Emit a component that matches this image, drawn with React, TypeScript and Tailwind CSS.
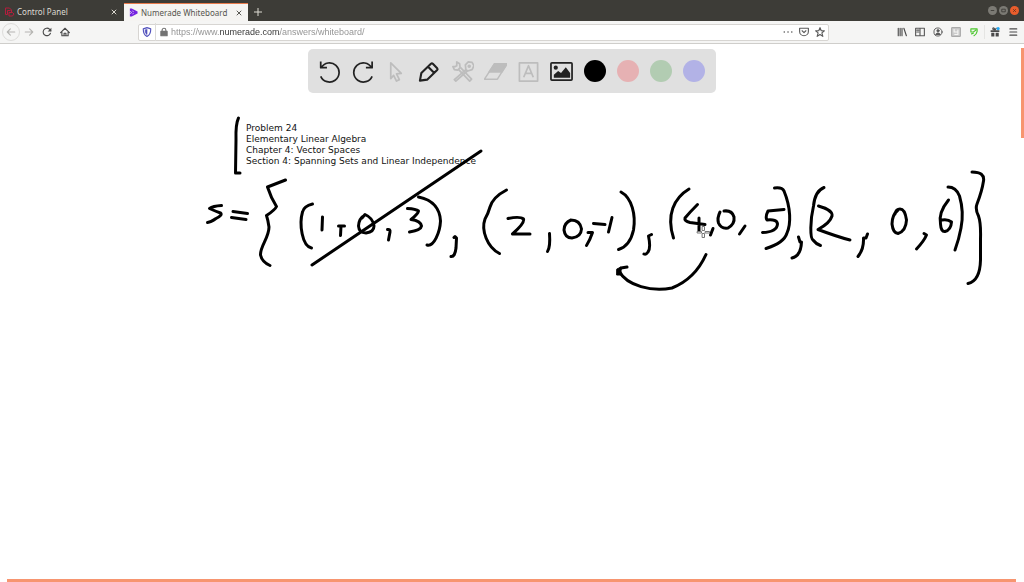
import { useState } from 'react';
import type { ReactNode } from 'react';

const NOTE_LINES = [
  'Problem 24',
  'Elementary Linear Algebra',
  'Chapter 4: Vector Spaces',
  'Section 4: Spanning Sets and Linear Independence',
];

// Pen strokes in board coordinates, grouped by symbol
const STROKES = [
  // margin bracket
  'M238.500 118Q235.500 124 236 140L235.500 173H240',
  // s =
  'M221.500 205.500Q213 206 209.500 208.500Q215 211 220.500 213Q223 215 216 218.500Q211 222 207.500 222.500',
  'M233 211.500L247.500 213.500',
  'M231.500 217.500L246 219.500',
  // {
  'M285.500 180L267.500 187Q271 198 276.500 206.500Q275 210 266.500 215.500Q268 220 269 227C269 238 260 246 260.500 255Q262 262 270 265.500',
  // (1, 0, 3)
  'M312.500 204Q304 206 302.500 212C299 224 302 246 311.500 248',
  'M322.500 217L322 230',
  'M338.500 226H344.500M341 226L340.500 235.500',
  'M365 215Q359 218 358.500 226Q359 233 366 233Q374 232 374 226Q373 218 365 214.500L362 218',
  'M387.500 229.500Q390.500 229 390 232L388.500 240',
  'M407.500 208.500Q416 209 418.500 211Q418 214 411 219.500Q421 221 421.500 226Q421 230 409.500 232',
  'M418.500 197C434 200 440 210 440.500 221C440 232 434 247 427 245',
  'M312 265L481 151',
  'M454 237.500L455 236.500L456.500 238L456 248Q455 257 451 256.500',
  // (2, 0, -1)
  'M506.500 190Q493 197 490 207Q488 214 485 219C481 230 487 247 499.500 253.500',
  'M508 218.500Q520 216 523.500 219Q525 223 512.500 234H530',
  'M549.500 233.500Q550.500 247 547.500 251.500',
  'M571 220Q564 223 564 230Q565 238 572 238Q581 237 581.500 229Q580 220 571 220',
  'M588 232.500H592.500Q590 240 586.500 245.500',
  'M593.500 223.500L605 224.500',
  'M612 217.500L608.500 232',
  'M621 192C632 198 636 215 633.500 230Q630 246 618.500 249.500',
  'M651.500 234.500L648.500 236Q651 248 648 252Q646 255 644 254',
  // (4, 0, 5)
  'M689 189C674 198 666 215 673.500 238',
  'M697.500 204.500Q690 212 685 218Q684 221 690 222.500L705 224.500M699 218V231.500',
  'M713 228.500L710.500 235',
  'M720 212Q717 218 718.500 223Q721 229 728 228Q735 224 734 217Q732 210 724 211',
  'M745 226L739.500 234',
  'M784 209.500L768 211Q765 217 767 220Q777 219 777.500 224Q777 232 762.500 232.500',
  'M774.500 188Q782 187 784 191C791 208 791 224 787 233Q784 243 766 248.500',
  'M798.500 237L800 242H801.500Q801 256 792 258',
  // (2, 0, 6)
  'M824 187.500Q815 191 813.500 206C810 221 810 238 813 240Q816 244 820.500 245.500',
  'M818.500 206Q833 210 832 216Q830 223 818 229.500Q838 237 850 240',
  'M867.500 234L866 238H863.500Q864 249 858 256.500',
  'M898 210Q892 215 892 224Q893 233 898 233.500Q906 231 906.500 220Q905 209 900 209Q896 209 895 214',
  'M924 233.500L926.500 235Q924 241 916.500 249',
  'M948.500 200C942 208 939 217 940.500 224Q941 232 945 231.500Q951 230 951.500 222Q948 219 942 220',
  'M948 187Q956 187 959.500 196C963 208 963 218 961 228Q959 239 955 250',
  // }
  'M972 172Q985 172 983.500 181Q982 191 977 204Q975 209 978.500 216Q981 223 980.500 239V260Q980 281 968 283.500',
  // arrow from 4 to -1
  'M706 254.500Q695 279 672 288C652 292 627 286 619 271L621 268L627 267',
];

const COLORS = [
  { name: 'Black', className: 'bg-black' },
  { name: 'Red', className: 'bg-[#e6b1b3]' },
  { name: 'Green', className: 'bg-[#b2ccb2]' },
  { name: 'Blue', className: 'bg-[#b2b2e6]' },
];

const TOOLS: { name: string; muted?: boolean; icon: ReactNode }[] = [
  {
    name: 'Undo',
    icon: <path d="M1.800 1.500v6.500h6.500M2.300 8A10 10 0 1 1 1.800 17" />,
  },
  {
    name: 'Redo',
    icon: <path d="M21 1.500v6.500h-6.500M20.500 8A10 10 0 1 0 21 17" />,
  },
  {
    name: 'Select',
    muted: true,
    icon: <path d="M6 3l11 11-5 .500 3 6-3 1.500-3-6L6 19.500z" />,
  },
  {
    name: 'Pen',
    icon: <path d="M2 21.500L3.500 13.500 13.500 4a1.500 1.500 0 0 1 2 0l4.500 4.500a1.500 1.500 0 0 1 0 2L9.500 20.500zM10.500 7l6.500 6.500" strokeWidth="2.200" />,
  },
  {
    name: 'Tools',
    muted: true,
    icon: (
      <>
        <path d="M2 7l1.500 3 3.500.500 2.500-2.500-.500-4-3-2v4L4 7z" />
        <path d="M8 10l11.500 12 2-2L10 8" />
        <path d="M15.500 10L3.500 20.500l1.500 1.500 12-10.500M15.500 10L15 5l3-3 4 .500L24 6l-2 4-4.500 1.500z" />
        <circle cx="19" cy="6.500" r="1" />
      </>
    ),
  },
  {
    name: 'Eraser',
    muted: true,
    icon: (
      <>
        <path d="M.500 20L11 4h13L14 20z" strokeWidth="1.500" />
        <path d="M5.500 12.500L11 4h13L18.500 12.500z" fill="currentColor" />
      </>
    ),
  },
  {
    name: 'Text',
    muted: true,
    icon: (
      <>
        <path d="M2.500 3h19v19h-19z" />
        <path d="M7 18l5-12 5 12M9 14h6" />
      </>
    ),
  },
  {
    name: 'Image',
    icon: (
      <>
        <rect x="1" y="3" width="22" height="18" rx="1" />
        <circle cx="6" cy="8" r="2.200" fill="currentColor" stroke="none" />
        <path d="M4 18.500v-3l4.500-4 3 2 5-6 4.500 6v5z" fill="currentColor" stroke="none" />
      </>
    ),
  },
];

function IconButton({
  label,
  className = 'text-[#5a5a5a]',
  disabled,
  children,
}: {
  label: string;
  className?: string;
  disabled?: boolean;
  children: ReactNode;
}) {
  return (
    <button
      aria-label={label}
      disabled={disabled}
      className={`flex h-[18px] min-w-[16px] shrink-0 items-center justify-center ${className}`}
    >
      <svg
        viewBox="0 0 16 16"
        className="size-[10px]"
        fill="none"
        stroke="currentColor"
        strokeWidth="1.800"
        strokeLinecap="round"
        strokeLinejoin="round"
      >
        {children}
      </svg>
    </button>
  );
}

function CloseIcon() {
  return (
    <svg viewBox="0 0 8 8" className="size-[6px]" fill="none" stroke="currentColor" strokeWidth="1.300">
      <path d="M1 1l6 6M7 1L1 7" />
    </svg>
  );
}

function TabBar() {
  return (
    <header className="flex h-[21px] items-end bg-[#3d3c37] text-[8px] leading-[18px]">
      <div className="flex h-[18px] w-[124px] items-center pr-[5px] pl-[5px] text-[#dedbd3]">
        <svg viewBox="0 0 20 20" className="size-[10px]" fill="none" stroke="#b51d3d" strokeWidth="2">
          <path d="M1 15V2h8l4 4v4M5 7h6M5 7v8H1M8 11h7l3 3-3 4H8z" />
        </svg>
        <button className="ml-[2px] flex-1 text-left">Control Panel</button>
        <button aria-label="Close Control Panel" className="p-[2px]">
          <CloseIcon />
        </button>
      </div>
      <div className="flex h-[18px] w-[124px] items-center border-t border-[#e87b4c] bg-[#f5f4f2] pr-[4px] pl-[5px] text-[#55544f]">
        <svg viewBox="0 0 20 20" className="size-[9px]">
          <path d="M2 1h4l13 7v4L6 19H2z" fill="#7422e0" />
          <path d="M2 7l4 3-4 3M8 6l2 3M8 14l2-3" stroke="#f5f4f2" strokeWidth="1.500" fill="none" />
        </svg>
        <button className="ml-[3px] flex-1 text-left whitespace-nowrap">Numerade Whiteboard</button>
        <button aria-label="Close Numerade Whiteboard" className="p-[2px]">
          <CloseIcon />
        </button>
      </div>
      <button aria-label="New tab" className="flex h-[18px] w-[19px] items-center justify-center text-[#dedbd3]">
        <svg viewBox="0 0 8 8" className="size-[8px]" stroke="currentColor" strokeWidth="1">
          <path d="M4 0v8M0 4h8" />
        </svg>
      </button>
      <div className="mr-[5px] ml-auto flex h-[21px] items-center gap-[2px]">
        <button aria-label="Minimize" className="flex size-[9px] items-center justify-center rounded-full bg-[#7b7a74] text-[#3d3c37]">
          <svg viewBox="0 0 8 8" className="size-[7px]" stroke="currentColor"><path d="M2 4h4" /></svg>
        </button>
        <button aria-label="Maximize" className="flex size-[9px] items-center justify-center rounded-full bg-[#7b7a74] text-[#3d3c37]">
          <svg viewBox="0 0 8 8" className="size-[7px]" fill="none" stroke="currentColor"><path d="M2 2.500h4v3H2z" /></svg>
        </button>
        <button aria-label="Close window" className="flex size-[9px] items-center justify-center rounded-full bg-[#e95d2c] text-[#65311c]">
          <svg viewBox="0 0 8 8" className="size-[7px]" stroke="currentColor"><path d="M2.500 2.500l3 3M5.500 2.500l-3 3" /></svg>
        </button>
      </div>
    </header>
  );
}

function NavBar() {
  const [url, setUrl] = useState('https://www.numerade.com/answers/whiteboard/');

  return (
    <nav className="flex h-[23px] items-center border-b border-[#cfcecb] bg-[#f5f5f4] pr-[2px] pl-[2px]">
      <IconButton label="Back" disabled className="w-[18px] rounded-full border border-[#dddcda] text-[#b5b4b1]">
        <path d="M14 8H2M7 3L2 8l5 5" />
      </IconButton>
      <IconButton label="Forward" disabled className="w-[18px] text-[#b5b4b1]">
        <path d="M2 8h12M9 3l5 5-5 5" />
      </IconButton>
      <IconButton label="Reload" className="w-[18px] text-[#4a4a4a]">
        <path d="M13.500 10A6 6 0 1 1 12 3.500L14 6" />
        <path d="M15 1v6H9z" fill="currentColor" stroke="none" />
      </IconButton>
      <IconButton label="Home" className="w-[18px] text-[#4a4a4a]">
        <path d="M1 9l7-7 7 7M3 8v6h10V8M6.500 14v-4h3v4" />
      </IconButton>

      <div className="ml-[64px] flex h-[17px] min-w-0 flex-1 items-center rounded-[2px] border border-[#d7d5d2] bg-white">
        <IconButton label="Tracking protection" className="text-[#5252bd]">
          <path d="M8 1l6 2c0 6-2 10-6 12-4-2-6-6-6-12z" />
          <path d="M8 4v8c-2-1-3-4-3-7z" fill="currentColor" strokeWidth="1" />
        </IconButton>
        <IconButton label="Site information" className="border-l border-[#dddcd9] text-[#737373]">
          <path d="M5 7V5a3 3 0 0 1 6 0v2" />
          <rect x="3" y="7" width="10" height="7" fill="currentColor" />
        </IconButton>
        <input
          aria-label="Address"
          value={url}
          onChange={(e) => setUrl(e.target.value)}
          className="min-w-0 flex-1 bg-[linear-gradient(to_right,#8f8f8f_49px,#333_49px,#333_109px,#8f8f8f_109px)] bg-clip-text font-['Liberation_Sans',sans-serif] text-[9px] leading-[15px] text-transparent outline-none"
        />
        <IconButton label="Page actions">
          <path d="M2 8h.1M8 8h.1M14 8h.1" strokeWidth="2.500" />
        </IconButton>
        <IconButton label="Save to Pocket">
          <path d="M1 2h14v5a7 7 0 0 1-14 0zM5 6l3 3 3-3" />
        </IconButton>
        <IconButton label="Bookmark">
          <path d="M8 1l2 5h5l-4 3.500 1.500 5.500L8 12l-4.500 3L5 9.500 1 6h5z" />
        </IconButton>
      </div>

      <div className="ml-[64px] flex items-center">
        <IconButton label="Library" className="w-[18px] text-[#4a4a4a]">
          <path d="M2 2v12M5 2v12M8 2v12M11 2l4 12" />
        </IconButton>
        <IconButton label="Sidebar" className="w-[18px] text-[#5a5a5a]">
          <path d="M1 2h14v12H1zM8 2v12M3 5h3M3 8h3" />
        </IconButton>
        <IconButton label="Account" className="w-[18px] text-[#5a5a5a]">
          <circle cx="8" cy="8" r="6.500" strokeWidth="1.500" />
          <circle cx="8" cy="6" r="2" fill="currentColor" strokeWidth="1" />
          <path d="M4.500 12Q8 7.500 11.500 12z" fill="currentColor" />
        </IconButton>
        <IconButton label="Extension" className="w-[18px] text-[#aaa]">
          <rect x="1" y="1" width="14" height="14" rx="1" fill="#ccc" />
          <path d="M5 4v4h6M11 5v7H6" stroke="#f5f5f4" />
        </IconButton>
        <IconButton label="Privacy" className="w-[18px] text-[#4bc72c]">
          <path d="M3 3h10v4q-1 5-5 7M3 3v5h4l4-3M4 11l3-1" />
        </IconButton>
        <span className="mx-px h-[14px] w-px bg-[#e5e5e3]" />
        <IconButton label="What's new" className="w-[18px] text-[#4a4a4a]">
          <path d="M1 5h14v3H1zM2 9h5v6H2zM9 9h5v6H9z" fill="currentColor" stroke="none" />
          <path d="M8 5Q3 4 5 1.500Q7 1 8 5L10 2" />
          <circle cx="13" cy="2.500" r="2.500" fill="#20a8f4" stroke="none" />
        </IconButton>
        <IconButton label="Open menu" className="w-[18px] text-[#4a4a4a]">
          <path d="M3 3h11M3 8h11M3 13h11" />
        </IconButton>
      </div>
    </nav>
  );
}

function Toolbar() {
  const [, setColor] = useState('Black');

  return (
    <div role="toolbar" aria-label="Drawing tools" className="flex h-[44px] items-center rounded-[5px] bg-[#e0e0e0] px-[6px]">
      {TOOLS.map((tool) => (
        <button
          key={tool.name}
          aria-label={tool.name}
          className={`flex h-[33px] w-[33px] items-center justify-center ${tool.muted ? 'text-[#bdbdbd]' : 'text-[#222]'}`}
        >
          <svg
            viewBox="0 0 24 24"
            className="size-[23px]"
            fill="none"
            stroke="currentColor"
            strokeWidth="1.800"
            strokeLinejoin="round"
          >
            {tool.icon}
          </svg>
        </button>
      ))}
      {COLORS.map((c) => (
        <button
          key={c.name}
          aria-label={c.name}
          onClick={() => setColor(c.name)}
          className="flex h-[33px] w-[33px] items-center justify-center"
        >
          <span className={`size-[22px] rounded-full ${c.className}`} />
        </button>
      ))}
    </div>
  );
}

function Board() {
  return (
    <main className="relative flex flex-1 flex-col items-center overflow-hidden bg-white pt-[5px]">
      <div className="absolute top-[79px] left-[246px] font-['DejaVu_Sans',sans-serif] text-[9px] leading-[11px] whitespace-nowrap text-[#111]">
        {NOTE_LINES.map((line) => (
          <p key={line}>{line}</p>
        ))}
      </div>
      <svg
        viewBox="0 44 1024 538"
        width="1024"
        height="538"
        className="absolute top-0 left-0"
        fill="none"
        stroke="#000"
        strokeWidth="3"
        strokeLinecap="round"
        strokeLinejoin="round"
      >
        {STROKES.map((d) => (
          <path key={d} d={d} />
        ))}
        {/* arrow head */}
        <path d="M617 269l4-2v8h-4z" fill="#000" strokeWidth="1" />
        {/* crosshair pointer */}
        <path
          d="M702.500 226.500h2v4h-2zM702.500 233.500h2v4h-2zM697.500 231.500h4v1.500h-4zM705.500 231.500h4v1.500h-4z"
          fill="#fff"
          stroke="#777"
          strokeWidth="1"
        />
      </svg>
      <div className="relative">
        <Toolbar />
      </div>
      <div className="absolute top-[4px] right-0 h-[90px] w-[3px] bg-[#f79570]" />
      <div className="absolute right-[8px] bottom-0 left-[7px] h-[3px] bg-[#f79570]" />
    </main>
  );
}

export default function App() {
  return (
    <div className="flex min-h-screen flex-col font-['Noto_Sans',sans-serif]">
      <TabBar />
      <NavBar />
      <Board />
    </div>
  );
}
